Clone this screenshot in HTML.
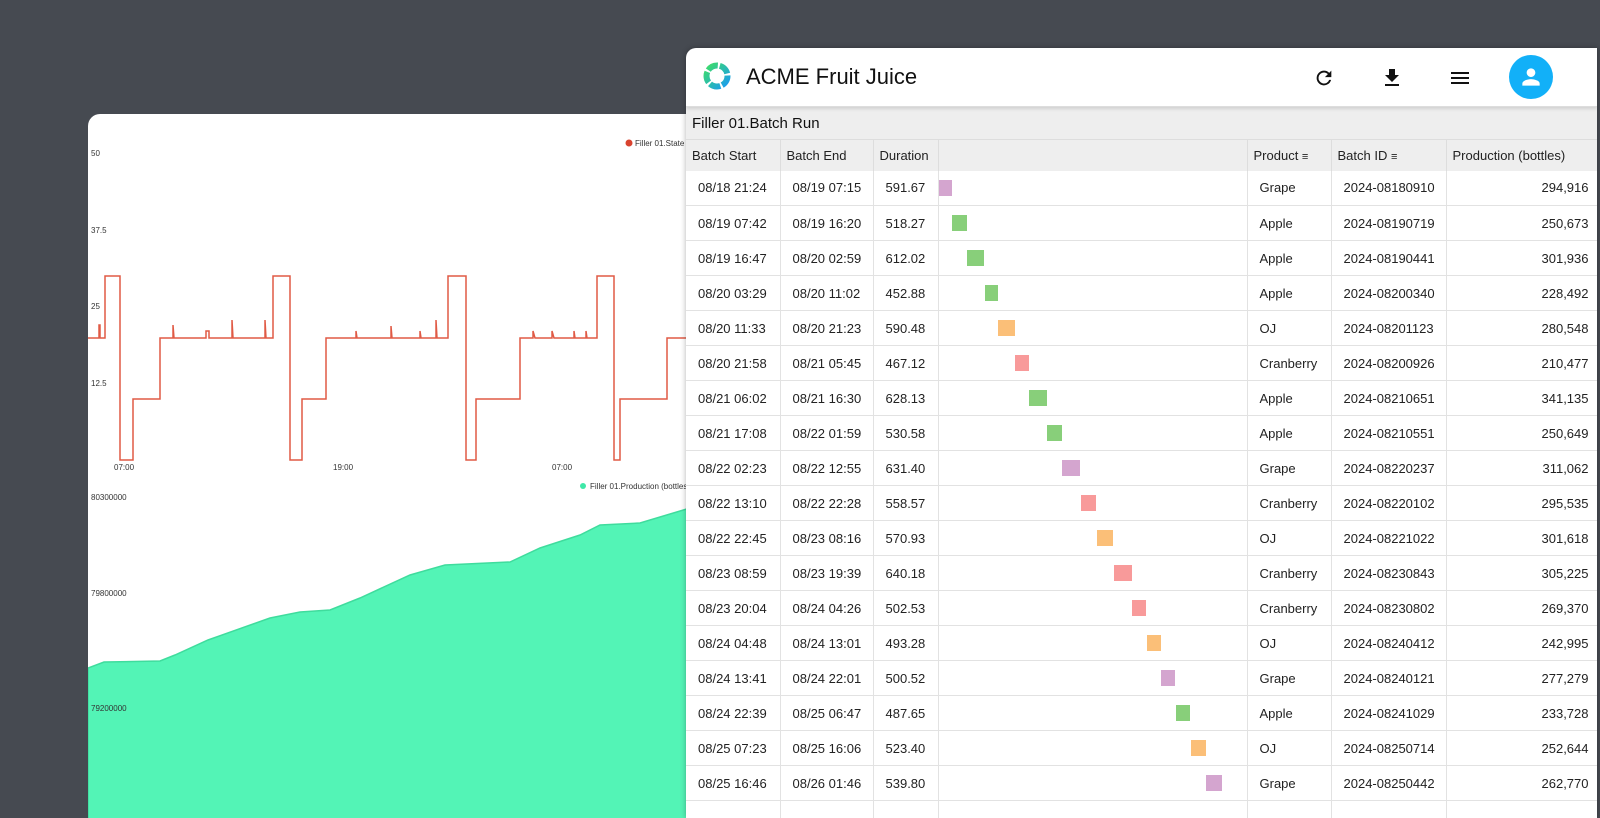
<!DOCTYPE html>
<html><head><meta charset="utf-8"><style>
*{margin:0;padding:0;box-sizing:border-box}
html,body{width:1600px;height:818px;overflow:hidden}
body{background:#464a51;font-family:"Liberation Sans",sans-serif;position:relative}
.chart{position:absolute;left:88px;top:114px;width:620px;height:704px;background:#fff;border-radius:12px 0 0 0;overflow:hidden}
.panel{position:absolute;left:686px;top:48px;width:911px;height:770px;background:#fff;border-radius:10px 0 0 0;overflow:hidden;box-shadow:0 0 6px rgba(0,0,0,.3)}
.top{height:59px;position:relative;border-bottom:1px solid #ddd;box-shadow:0 2px 3px rgba(0,0,0,.12)}
.top .t{position:absolute;left:60px;top:16px;font-size:22px;color:#111}
.sub{height:32px;background:#eee;font-size:15px;padding:8px 6px;color:#111}
table{border-collapse:collapse;font-size:13px;color:#222;table-layout:fixed;width:911px}
th{background:#eee;font-weight:normal;text-align:left;height:31px;padding:0 6px;border-right:1px solid #ddd;border-top:1px solid #ddd;white-space:nowrap;overflow:hidden}
td{height:35px;border-right:1px solid #e2e2e2;border-bottom:1px solid #e2e2e2;padding:0 4px 0 12px;position:relative;white-space:nowrap;overflow:hidden}
td.r{text-align:right;padding-right:8px}
.b{position:absolute;top:9px;height:16px}
.G{background:#d4a5cf}.A{background:#88cf7a}.O{background:#fbbf78}.C{background:#f89a9a}
</style></head><body>
<div class="chart">
<svg width="708" height="818" style="position:absolute;left:-88px;top:-114px;overflow:visible" font-family="Liberation Sans" font-size="8" fill="#333">
<polyline fill="none" stroke="#e05a45" stroke-width="1.5" points="88,338 99,338 99,325 100,325 100,338 105,338 105,276 120,276 120,460 133,460 133,399 160,399 160,338 173,338 173,325 174,338 206,338 206,331 209,331 209,338 232,338 232,320 233,338 265,338 265,320 266,338 273,338 273,276 290,276 290,460 302,460 302,399 326,399 326,338 356,338 356,331 357,338 391,338 391,326 392,338 420,338 420,331 421,338 436,338 436,320 437,338 448,338 448,276 466,276 466,460 476,460 476,399 520,399 520,338 533,338 533,331 535,338 552,338 552,331 554,338 574,338 574,331 575,338 586,338 586,331 587,338 597,338 597,276 614,276 614,460 620,460 620,399 667,399 667,338 686,338"/>
<polygon fill="#53f4b6" stroke="#3fdc9d" stroke-width="1.5" points="88,668 104,662 160,661 175,655 208,640 270,618 300,612 330,610 360,598 410,575 445,565 510,562 540,548 580,535 600,525 640,523 690,508 690,830 88,830"/>
<text x="91" y="156">50</text><text x="91" y="233">37.5</text><text x="91" y="309">25</text><text x="91" y="386">12.5</text>
<text x="114" y="470">07:00</text><text x="333" y="470">19:00</text><text x="552" y="470">07:00</text>
<circle cx="629" cy="143" r="3.5" fill="#d9432f"/><text x="635" y="146">Filler 01.State</text>
<circle cx="583" cy="486" r="3" fill="#3fe8a8"/><text x="590" y="489">Filler 01.Production (bottles)</text>
<text x="91" y="500">80300000</text><text x="91" y="596">79800000</text><text x="91" y="711">79200000</text>
</svg>
</div>
<div class="panel">
<div class="top">
<svg style="position:absolute;left:16px;top:13px" width="30" height="30" viewBox="0 0 30 30"><defs><linearGradient id="g" x1="0" y1="0" x2="1" y2="1"><stop offset="0" stop-color="#3ddc6a"/><stop offset="1" stop-color="#1a9cf0"/></linearGradient></defs><circle cx="15" cy="15" r="10.5" fill="none" stroke="url(#g)" stroke-width="6" stroke-dasharray="11 2"/></svg>
<div class="t">ACME Fruit Juice</div>
<svg style="position:absolute;left:627px;top:19px" width="22" height="22" viewBox="0 0 24 24"><path d="M17.65 6.35A7.96 7.96 0 0 0 12 4a8 8 0 1 0 7.730 10h-2.08A6 6 0 1 1 12 6c1.66 0 3.14.69 4.22 1.78L13 11h7V4z" fill="#111"/></svg>
<svg style="position:absolute;left:694px;top:18px" width="24" height="24" viewBox="0 0 24 24"><path d="M19 9h-4V3H9v6H5l7 7zM5 18v2h14v-2z" fill="#111"/></svg>
<svg style="position:absolute;left:762px;top:18px" width="24" height="24" viewBox="0 0 24 24"><path d="M3 18h18v-2H3zm0-5h18v-2H3zm0-7v2h18V6z" fill="#111"/></svg>
<div style="position:absolute;left:823px;top:7px;width:44px;height:44px;border-radius:50%;background:#12b0f8"></div>
<svg style="position:absolute;left:832px;top:16px" width="26" height="26" viewBox="0 0 24 24"><path d="M12 12c2.2 0 4-1.8 4-4s-1.8-4-4-4-4 1.8-4 4 1.8 4 4 4zm0 2c-2.7 0-8 1.3-8 4v2h16v-2c0-2.7-5.3-4-8-4z" fill="#fff"/></svg>
</div>
<div class="sub">Filler 01.Batch Run</div>
<table>
<colgroup><col style="width:94px"><col style="width:93px"><col style="width:65px"><col style="width:309px"><col style="width:84px"><col style="width:115px"><col style="width:151px"></colgroup>
<tr><th>Batch Start</th><th>Batch End</th><th>Duration</th><th></th><th>Product <span style="font-size:11px">&#8801;</span></th><th>Batch ID <span style="font-size:11px">&#8801;</span></th><th>Production (bottles)</th></tr>
<tr><td>08/18 21:24</td><td>08/19 07:15</td><td>591.67</td><td><div class="b G" style="left:0;width:13px"></div></td><td>Grape</td><td>2024-08180910</td><td class="r">294,916</td></tr>
<tr><td>08/19 07:42</td><td>08/19 16:20</td><td>518.27</td><td><div class="b A" style="left:13px;width:15px"></div></td><td>Apple</td><td>2024-08190719</td><td class="r">250,673</td></tr>
<tr><td>08/19 16:47</td><td>08/20 02:59</td><td>612.02</td><td><div class="b A" style="left:28px;width:17px"></div></td><td>Apple</td><td>2024-08190441</td><td class="r">301,936</td></tr>
<tr><td>08/20 03:29</td><td>08/20 11:02</td><td>452.88</td><td><div class="b A" style="left:46px;width:13px"></div></td><td>Apple</td><td>2024-08200340</td><td class="r">228,492</td></tr>
<tr><td>08/20 11:33</td><td>08/20 21:23</td><td>590.48</td><td><div class="b O" style="left:59px;width:17px"></div></td><td>OJ</td><td>2024-08201123</td><td class="r">280,548</td></tr>
<tr><td>08/20 21:58</td><td>08/21 05:45</td><td>467.12</td><td><div class="b C" style="left:76px;width:14px"></div></td><td>Cranberry</td><td>2024-08200926</td><td class="r">210,477</td></tr>
<tr><td>08/21 06:02</td><td>08/21 16:30</td><td>628.13</td><td><div class="b A" style="left:90px;width:18px"></div></td><td>Apple</td><td>2024-08210651</td><td class="r">341,135</td></tr>
<tr><td>08/21 17:08</td><td>08/22 01:59</td><td>530.58</td><td><div class="b A" style="left:108px;width:15px"></div></td><td>Apple</td><td>2024-08210551</td><td class="r">250,649</td></tr>
<tr><td>08/22 02:23</td><td>08/22 12:55</td><td>631.40</td><td><div class="b G" style="left:123px;width:18px"></div></td><td>Grape</td><td>2024-08220237</td><td class="r">311,062</td></tr>
<tr><td>08/22 13:10</td><td>08/22 22:28</td><td>558.57</td><td><div class="b C" style="left:142px;width:15px"></div></td><td>Cranberry</td><td>2024-08220102</td><td class="r">295,535</td></tr>
<tr><td>08/22 22:45</td><td>08/23 08:16</td><td>570.93</td><td><div class="b O" style="left:158px;width:16px"></div></td><td>OJ</td><td>2024-08221022</td><td class="r">301,618</td></tr>
<tr><td>08/23 08:59</td><td>08/23 19:39</td><td>640.18</td><td><div class="b C" style="left:175px;width:18px"></div></td><td>Cranberry</td><td>2024-08230843</td><td class="r">305,225</td></tr>
<tr><td>08/23 20:04</td><td>08/24 04:26</td><td>502.53</td><td><div class="b C" style="left:193px;width:14px"></div></td><td>Cranberry</td><td>2024-08230802</td><td class="r">269,370</td></tr>
<tr><td>08/24 04:48</td><td>08/24 13:01</td><td>493.28</td><td><div class="b O" style="left:208px;width:14px"></div></td><td>OJ</td><td>2024-08240412</td><td class="r">242,995</td></tr>
<tr><td>08/24 13:41</td><td>08/24 22:01</td><td>500.52</td><td><div class="b G" style="left:222px;width:14px"></div></td><td>Grape</td><td>2024-08240121</td><td class="r">277,279</td></tr>
<tr><td>08/24 22:39</td><td>08/25 06:47</td><td>487.65</td><td><div class="b A" style="left:237px;width:14px"></div></td><td>Apple</td><td>2024-08241029</td><td class="r">233,728</td></tr>
<tr><td>08/25 07:23</td><td>08/25 16:06</td><td>523.40</td><td><div class="b O" style="left:252px;width:15px"></div></td><td>OJ</td><td>2024-08250714</td><td class="r">252,644</td></tr>
<tr><td>08/25 16:46</td><td>08/26 01:46</td><td>539.80</td><td><div class="b G" style="left:267px;width:16px"></div></td><td>Grape</td><td>2024-08250442</td><td class="r">262,770</td></tr>
<tr><td></td><td></td><td></td><td></td><td></td><td></td><td></td></tr>
</table>
</div>
</body></html>
